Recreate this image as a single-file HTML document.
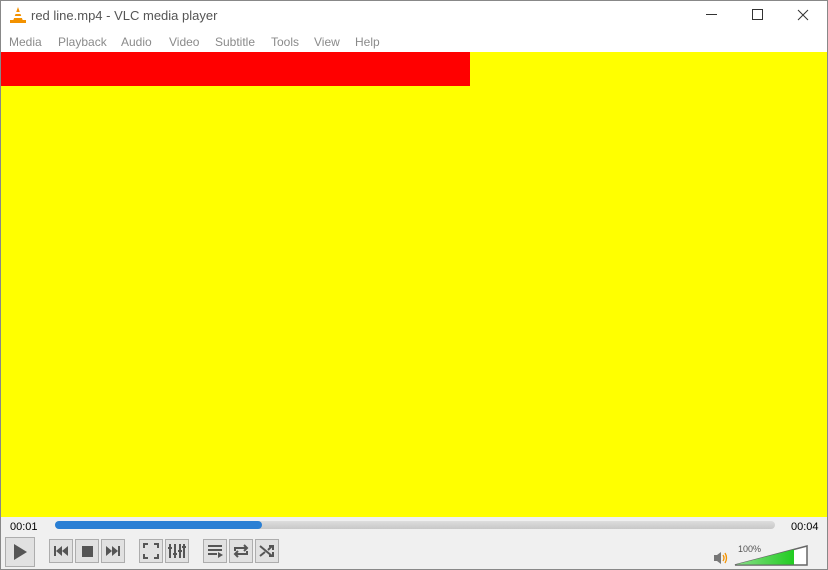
<!DOCTYPE html><html><head><style>
body{margin:0;width:828px;height:570px;overflow:hidden;font-family:"Liberation Sans",sans-serif;background:#f0f0f0;position:relative}
.a{position:absolute}
.btn{position:absolute;top:539px;width:22px;height:22px;border:1px solid #adadad;background:#e1e1e1;display:flex;align-items:center;justify-content:center}
</style></head><body>
<div class="a" style="left:0;top:0;width:826px;height:568px;border:1px solid #888"></div>
<div class="a" style="left:1;top:1px;left:1px;width:826px;height:30px;background:#fff"></div>
<svg class="a" style="left:9px;top:6px" width="18" height="18"><polygon points="9,1 14,15 4,15" fill="#f39200"/><rect x="5" y="6" width="8" height="2" fill="#fff"/><rect x="4" y="10" width="10" height="2" fill="#fff"/><rect x="1" y="14" width="16" height="3" fill="#f39200"/></svg>
<div class="a" style="left:31px;top:8px;font-size:13px;color:#555">red line.mp4 - VLC media player</div>
<div class="a" style="left:706px;top:14px;width:11px;height:1px;background:#333"></div>
<div class="a" style="left:752px;top:9px;width:9px;height:9px;border:1px solid #333"></div>
<svg class="a" style="left:797px;top:9px" width="12" height="12"><path d="M1 1L11 11M11 1L1 11" stroke="#333"/></svg>
<div class="a" style="left:1px;top:31px;width:826px;height:21px;background:#fff"></div>
<div class="a" style="left:9px;top:35px;font-size:12px;color:#8a8a8a;word-spacing:0">
<span style="position:absolute;left:0">Media</span><span style="position:absolute;left:49px">Playback</span><span style="position:absolute;left:112px">Audio</span><span style="position:absolute;left:160px">Video</span><span style="position:absolute;left:206px">Subtitle</span><span style="position:absolute;left:262px">Tools</span><span style="position:absolute;left:305px">View</span><span style="position:absolute;left:346px">Help</span></div>
<div class="a" style="left:1px;top:52px;width:826px;height:465px;background:#ff0"></div>
<div class="a" style="left:1px;top:52px;width:469px;height:34px;background:#f00"></div>
<div class="a" style="left:10px;top:521px;font-size:11px;color:#000">00:01</div>
<div class="a" style="left:791px;top:521px;font-size:11px;color:#000">00:04</div>
<div class="a" style="left:55px;top:521px;width:720px;height:8px;border-radius:4px;background:linear-gradient(#ddd,#c8c8c8)"></div>
<div class="a" style="left:55px;top:521px;width:207px;height:8px;border-radius:4px;background:#2a7fd4"></div>
<div class="btn" style="left:5px;top:537px;width:28px;height:28px"><svg width="16" height="18"><polygon points="2,1 15,9 2,17" fill="#555"/></svg></div>
<div class="btn" style="left:49px"><svg width="16" height="12"><rect x="1" y="1" width="2" height="10" fill="#555"/><polygon points="9,1 3,6 9,11" fill="#555"/><polygon points="15,1 9,6 15,11" fill="#555"/></svg></div>
<div class="btn" style="left:75px"><div style="width:11px;height:11px;background:#555"></div></div>
<div class="btn" style="left:101px"><svg width="16" height="12"><rect x="13" y="1" width="2" height="10" fill="#555"/><polygon points="1,1 7,6 1,11" fill="#555"/><polygon points="7,1 13,6 7,11" fill="#555"/></svg></div>
<div class="btn" style="left:139px"><svg width="16" height="16" fill="none" stroke="#555" stroke-width="2"><path d="M1 5V1H5M11 1H15V5M15 11V15H11M5 15H1V11"/></svg></div>
<div class="btn" style="left:165px"><svg width="18" height="16" stroke="#555" stroke-width="2"><path d="M2 1V15M7 1V15M12 1V15M16 1V15"/><path d="M0 5H4M5 11H9M10 8H14M14 4H18" /></svg></div>
<div class="btn" style="left:203px"><svg width="16" height="14" fill="#555"><rect x="1" y="1" width="14" height="2"/><rect x="1" y="5" width="14" height="2"/><rect x="1" y="9" width="9" height="2"/><polygon points="11,8 16,11 11,14"/></svg></div>
<div class="btn" style="left:229px"><svg width="16" height="14" fill="none" stroke="#555" stroke-width="2"><path d="M2 7V4H13M11 1L14 4L11 7M14 7V10H3M5 13L2 10L5 7"/></svg></div>
<div class="btn" style="left:255px"><svg width="16" height="14" fill="none" stroke="#555" stroke-width="2"><path d="M1 2L13 12M1 12L6 8M9 6L13 2M10 2H14V6M10 12H14V8"/></svg></div>
<svg class="a" style="left:713px;top:551px" width="16" height="14"><polygon points="1,4 4,4 8,1 8,13 4,10 1,10" fill="#777"/><path d="M10 4Q12 7 10 10M12 2Q15 7 12 12" stroke="#f39200" fill="none" stroke-width="1.3"/></svg>
<div class="a" style="left:738px;top:544px;font-size:9px;color:#555">100%</div>
<svg class="a" style="left:733px;top:544px" width="76" height="22"><polygon points="2,21 74,2 74,21" fill="#fff" stroke="#666" stroke-width="1.5"/><defs><linearGradient id="g"><stop offset="0" stop-color="#8d8"/><stop offset="1" stop-color="#2c2"/></linearGradient></defs><polygon points="3,20.5 61,5.5 61,20.5" fill="url(#g)"/></svg>
</body></html>
